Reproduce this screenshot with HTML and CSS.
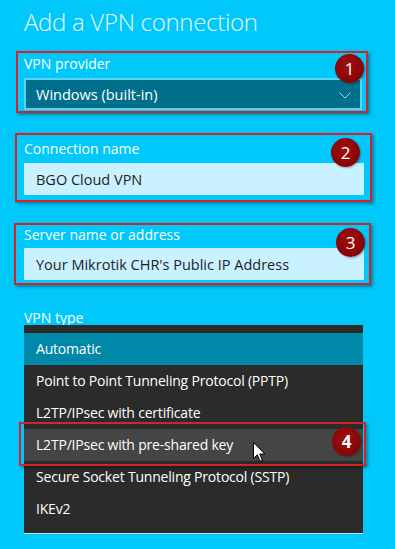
FILE: index.html
```html
<!DOCTYPE html>
<html>
<head>
<meta charset="utf-8">
<link rel="stylesheet" href="styles.css">
</head>
<body>
<div class="page">
  <h1 class="title">Add a VPN connection</h1>

  <div class="annot annot-1">
    <div class="label">VPN provider</div>
    <div class="select">
      <span>Windows (built-in)</span>
      <svg class="chev" width="12" height="7" viewBox="0 0 12 7"><path d="M0.5 0.5 L6 6 L11.5 0.5" fill="none" stroke="#9fd6e6" stroke-width="1"/></svg>
    </div>
    <div class="badge b1">1</div>
  </div>

  <div class="annot annot-2">
    <div class="label">Connection name</div>
    <div class="input">BGO Cloud VPN</div>
    <div class="badge b2">2</div>
  </div>

  <div class="annot annot-3">
    <div class="label">Server name or address</div>
    <div class="input">Your Mikrotik CHR's Public IP Address</div>
    <div class="badge b3">3</div>
  </div>

  <div class="label type-label">VPN type</div>
  <div class="dropdown">
    <div class="opt selected">Automatic</div>
    <div class="opt">Point to Point Tunneling Protocol (PPTP)</div>
    <div class="opt">L2TP/IPsec with certificate</div>
    <div class="opt hover">L2TP/IPsec with pre-shared key</div>
    <div class="opt">Secure Socket Tunneling Protocol (SSTP)</div>
    <div class="opt">IKEv2</div>
    <div class="annot-4"></div>
    <div class="badge b4">4</div>
    <svg class="cursor" width="13" height="21" viewBox="0 0 13 21"><path d="M0.5 0.5 L0.5 16.5 L4.3 12.8 L7 19.3 L9.4 18.3 L6.8 12 L11.8 12 Z" fill="#ffffff" stroke="#000000" stroke-width="1" stroke-linejoin="round"/></svg>
  </div>
</div>
</body>
</html>
```

FILE: styles.css
```css
html, body {
  margin: 0;
  padding: 0;
}
body {
  background: #00c8fa;
  width: 395px;
  height: 549px;
  overflow: hidden;
  font-family: "Open Sans", "Noto Sans", sans-serif;
  color: #ffffff;
}
.page {
  padding: 0 0 0 24px;
  display: flex;
  flex-direction: column;
  align-items: flex-start;
}
.title {
  margin: 4px 0 0 0;
  height: 47px;
  font-size: 24px;
  letter-spacing: -0.3px;
  font-weight: 300;
  line-height: 36px;
  color: #e8f9ff;
}
.label {
  font-size: 14px;
  line-height: 20px;
  height: 20px;
  color: #ffffff;
}
.annot {
  position: relative;
  border: 2px solid #d3242c;
  box-shadow: 2px 2px 3px rgba(0, 0, 0, 0.35);
  display: flex;
  flex-direction: column;
  gap: 4px;
}
.annot-1 {
  margin-left: -8px;
  width: 338px;
  padding: 1px 4px 1px 6px;
}
.annot-2 {
  margin-top: 20px;
  margin-left: -9px;
  width: 340px;
  padding: 4px 6px 5px 7px;
}
.annot-3 {
  margin-top: 21px;
  margin-left: -10px;
  width: 340px;
  padding: 0 5px 3px 8px;
  gap: 3px;
}
.select {
  box-sizing: border-box;
  width: 338px;
  height: 32px;
  background: #006f8b;
  border: 2px solid #5ad3f0;
  display: flex;
  align-items: center;
  justify-content: space-between;
  padding: 0 9px 0 10px;
  font-size: 14.5px;
  color: #ffffff;
}
.chev {
  margin-top: 2px;
}
.input {
  box-sizing: border-box;
  width: 340px;
  height: 32px;
  background: #c9f1ff;
  display: flex;
  align-items: center;
  padding-left: 12px;
  font-size: 14.5px;
  color: #1e1e1e;
}
.badge {
  position: absolute;
  width: 29px;
  height: 29px;
  border-radius: 50%;
  background: radial-gradient(circle at 45% 40%, #a0100f 0%, #8a0606 60%, #6e0404 100%);
  color: #ffffff;
  font-size: 17px;
  line-height: 29px;
  text-align: center;
  box-shadow: 1px 1px 2px rgba(0, 0, 0, 0.3);
}
.b1 { left: 317px; top: 1px; }
.b2 { left: 314px; top: 3px; }
.b3 { left: 320px; top: 3px; }
.b4 { left: 308px; top: 102px; font-weight: 700; }
.type-label {
  margin-top: 25px;
  line-height: 15px;
  height: 15px;
}
.dropdown {
  position: relative;
  box-sizing: border-box;
  width: 339px;
  background: #2b2b2b;
  padding: 8px 0 8px 0;
  border-bottom: 1px solid #b8e6f4;
  display: flex;
  flex-direction: column;
}
.opt {
  height: 32px;
  line-height: 32px;
  padding-left: 12px;
  font-size: 14px;
  letter-spacing: -0.2px;
  color: #ffffff;
}
.opt.selected {
  background: #0088a8;
}
.opt.hover {
  background: #454545;
}
.annot-4 {
  position: absolute;
  left: -5px;
  top: 97px;
  width: 343px;
  height: 40px;
  border: 2px solid #d3242c;
  box-shadow: 2px 2px 3px rgba(0, 0, 0, 0.35);
}
.cursor {
  position: absolute;
  left: 229px;
  top: 117px;
}
```
